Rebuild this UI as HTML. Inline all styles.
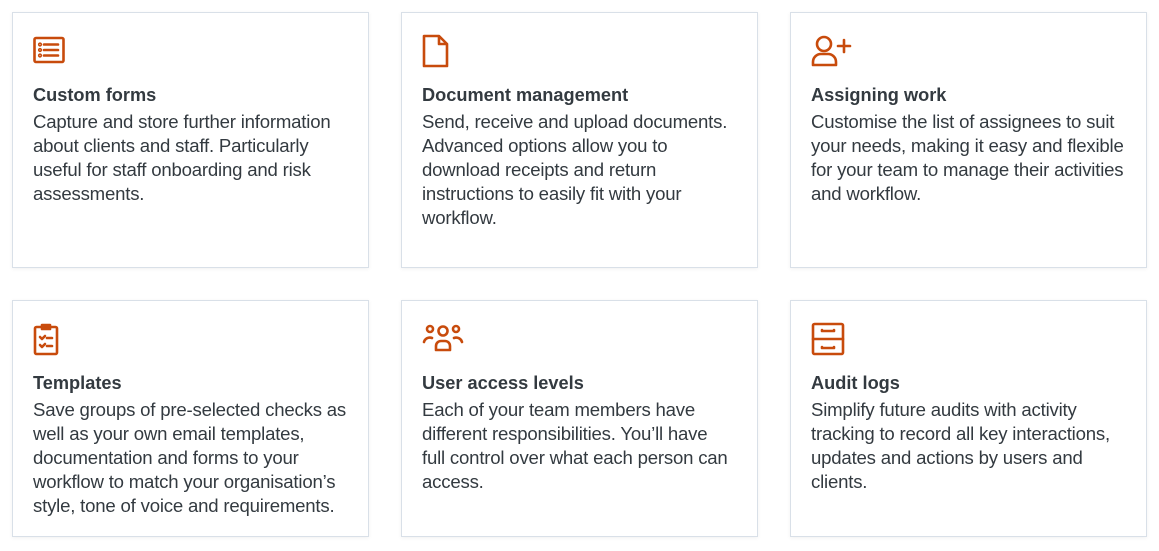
<!DOCTYPE html>
<html><head><style>
body{margin:0;background:#fff;width:1159px;height:551px;overflow:hidden;font-family:"Liberation Sans",sans-serif;color:#333a40}
.c{position:absolute;box-sizing:border-box;border:1px solid #d9e0e8;background:#fff;box-shadow:0 1px 4px rgba(0,0,0,0.06);padding:0 20px}
.ic{position:absolute;left:20px;top:21px}
h3{position:absolute;left:20px;top:72px;margin:0;font-size:18.2px;font-weight:bold;white-space:nowrap}
p{position:absolute;left:20px;top:97px;margin:0;font-size:18.6px;line-height:24px;white-space:nowrap;letter-spacing:-0.2px}
svg{stroke:#c84b0c;fill:none;stroke-width:2.6;stroke-linecap:round;stroke-linejoin:round}
</style></head><body>
<div class="c" style="left:12px;top:12px;width:357px;height:256px">
<svg class="ic" width="34" height="30" viewBox="0 0 34 30" style="top:22px"><rect x="1.5" y="3" width="29" height="24" rx="1.5"/><circle cx="7" cy="9.5" r=".8"/><circle cx="7" cy="15" r=".8"/><circle cx="7" cy="20.5" r=".8"/><path d="M11 9.5h14M11 15h14M11 20.5h14"/></svg>
<h3>Custom forms</h3>
<p>Capture and store further information<br>about clients and staff. Particularly<br>useful for staff onboarding and risk<br>assessments.</p></div>
<div class="c" style="left:401px;top:12px;width:357px;height:256px">
<svg class="ic" width="30" height="34" viewBox="0 0 30 34"><path d="M2 2h15l8 8v22H2z M17 2v8h8"/></svg>
<h3>Document management</h3>
<p>Send, receive and upload documents.<br>Advanced options allow you to<br>download receipts and return<br>instructions to easily fit with your<br>workflow.</p></div>
<div class="c" style="left:790px;top:12px;width:357px;height:256px">
<svg class="ic" width="44" height="34" viewBox="0 0 44 34"><circle cx="13" cy="10" r="7"/><path d="M2 31v-3a8 8 0 0 1 8-8h7a8 8 0 0 1 8 8v3z M33 6v12 M27 12h12"/></svg>
<h3>Assigning work</h3>
<p>Customise the list of assignees to suit<br>your needs, making it easy and flexible<br>for your team to manage their activities<br>and workflow.</p></div>
<div class="c" style="left:12px;top:300px;width:357px;height:237px">
<svg class="ic" width="30" height="34" viewBox="0 0 30 34"><rect x="2" y="5" width="22" height="27" rx="1.5"/><path d="M9 3h8v4H9z M7 15l2 2 3-3 M14 16h5 M7 23l2 2 3-3 M14 24h5"/></svg>
<h3>Templates</h3>
<p>Save groups of pre-selected checks as<br>well as your own email templates,<br>documentation and forms to your<br>workflow to match your organisation’s<br>style, tone of voice and requirements.</p></div>
<div class="c" style="left:401px;top:300px;width:357px;height:237px">
<svg class="ic" width="44" height="34" viewBox="0 0 44 34" style="top:22px"><circle cx="21" cy="8" r="4.5"/><circle cx="8" cy="6" r="3"/><circle cx="34" cy="6" r="3"/><path d="M14 27v-4a5 5 0 0 1 5-5h4a5 5 0 0 1 5 5v4z M2 19a6 6 0 0 1 8-4 M40 19a6 6 0 0 0-8-4"/></svg>
<h3>User access levels</h3>
<p>Each of your team members have<br>different responsibilities. You’ll have<br>full control over what each person can<br>access.</p></div>
<div class="c" style="left:790px;top:300px;width:357px;height:237px">
<svg class="ic" width="34" height="34" viewBox="0 0 34 34"><rect x="2" y="2" width="30" height="30" rx="1.5"/><path d="M2 17h30 M11 9h12 M11 26h12 M11 9v-1 M23 9v-1 M11 26v-1 M23 26v-1"/></svg>
<h3>Audit logs</h3>
<p>Simplify future audits with activity<br>tracking to record all key interactions,<br>updates and actions by users and<br>clients.</p></div>
</body></html>
